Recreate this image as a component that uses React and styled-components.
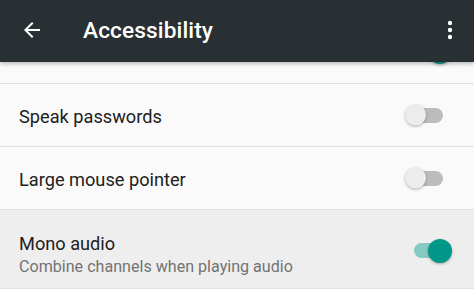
import React from "react";
import styled, { createGlobalStyle } from "styled-components";

const Global = createGlobalStyle`
    html, body {
        margin: 0;
        padding: 0;
        background: #fafafa;
        font-family: Roboto, "Noto Sans", Arial, sans-serif;
    }
`;

const Tela = styled.div`
    width: 474px;
    height: 289px;
    display: flex;
    flex-direction: column;
    overflow: hidden;
    background: #fafafa;
`;

const Barra = styled.header`
    position: relative;
    z-index: 2;
    flex: 0 0 62px;
    display: flex;
    align-items: center;
    background: #283034;
    color: #fff;
    padding: 0 12px 2px 18px;
    box-sizing: border-box;
    box-shadow: 0 2px 4px rgba(0, 0, 0, 0.25);
`;

const BotaoIcone = styled.button`
    background: none;
    border: 0;
    padding: 0;
    display: flex;
    align-items: center;
    justify-content: center;
    color: #fff;
    width: ${(p) => p.largura || "28px"};
    height: 28px;
`;

const Titulo = styled.h1`
    margin: 0 0 0 37px;
    flex: 1;
    font-size: 22.7px;
    font-weight: 500;
    letter-spacing: 0.1px;
`;

const Area = styled.div`
    flex: 1;
    overflow: hidden;
`;

const Lista = styled.ul`
    list-style: none;
    margin: -41px 0 0 0;
    padding: 0;
`;

const Item = styled.li`
    display: flex;
    align-items: center;
    box-sizing: border-box;
    height: ${(p) => (p.resumo ? "79px" : "63px")};
    padding: ${(p) => (p.resumo ? "3px" : "0")} 22px 0 19px;
    background: ${(p) => (p.ativo ? "#eeeeee" : "#fafafa")};
    border-bottom: 1px solid #e2e2e2;
`;

const Textos = styled.div`
    flex: 1;
    display: flex;
    flex-direction: column;
    padding-top: ${(p) => (p.resumo ? "8px" : "4px")};
`;

const Nome = styled.span`
    font-size: 18.2px;
    color: #212121;
    line-height: 24px;
`;

const Resumo = styled.span`
    font-size: 16.1px;
    color: #737373;
    line-height: 22px;
`;

const Trilho = styled.div`
    position: relative;
    width: 36px;
    height: 15px;
    border-radius: 8px;
    background: ${(p) => (p.ligado ? "#86cbc3" : "#bcbcbc")};
    margin-right: ${(p) => (p.ligado ? "2px" : "9px")};
`;

const Bolinha = styled.span`
    position: absolute;
    top: 50%;
    width: ${(p) => (p.ligado ? "24px" : "21px")};
    height: ${(p) => (p.ligado ? "24px" : "21px")};
    border-radius: 50%;
    transform: translateY(-50%);
    ${(p) => (p.ligado ? "right: -2px;" : "left: -2px;")}
    background: ${(p) => (p.ligado ? "#009688" : "#ececec")};
    box-shadow: 0 1px 3px rgba(0, 0, 0, 0.3);
`;

function Chave({ ligado }) {
    return (
        <Trilho ligado={ligado}>
            <Bolinha ligado={ligado} />
        </Trilho>
    );
}

// a primeira linha fica escondida sob a barra (lista rolada)
const itens = [
    { id: "oculto", nome: "", ligado: true },
    { id: "senhas", nome: "Speak passwords", ligado: false },
    { id: "ponteiro", nome: "Large mouse pointer", ligado: false },
    { id: "mono", nome: "Mono audio", resumo: "Combine channels when playing audio", ligado: true, ativo: true },
];

export default function App() {
    return (
        <Tela>
            <Global />
            <Barra>
                <BotaoIcone aria-label="Voltar">
                    <svg width="24" height="24" viewBox="0 0 24 24">
                        <path d="M20 11H7.83l5.59-5.59L12 4l-8 8 8 8 1.41-1.41L7.83 13H20v-2z" fill="#fff" />
                    </svg>
                </BotaoIcone>
                <Titulo>Accessibility</Titulo>
                <BotaoIcone largura="24px" aria-label="Mais opções">
                    <svg width="24" height="24" viewBox="0 0 24 24">
                        <circle cx="12" cy="5" r="2.2" fill="#fff" />
                        <circle cx="12" cy="12" r="2.2" fill="#fff" />
                        <circle cx="12" cy="19" r="2.2" fill="#fff" />
                    </svg>
                </BotaoIcone>
            </Barra>
            <Area>
                <Lista>
                    {itens.map((it) => (
                        <Item key={it.id} resumo={it.resumo} ativo={it.ativo}>
                            <Textos resumo={it.resumo}>
                                {it.nome && <Nome>{it.nome}</Nome>}
                                {it.resumo && <Resumo>{it.resumo}</Resumo>}
                            </Textos>
                            <Chave ligado={it.ligado} />
                        </Item>
                    ))}
                </Lista>
            </Area>
        </Tela>
    );
}
